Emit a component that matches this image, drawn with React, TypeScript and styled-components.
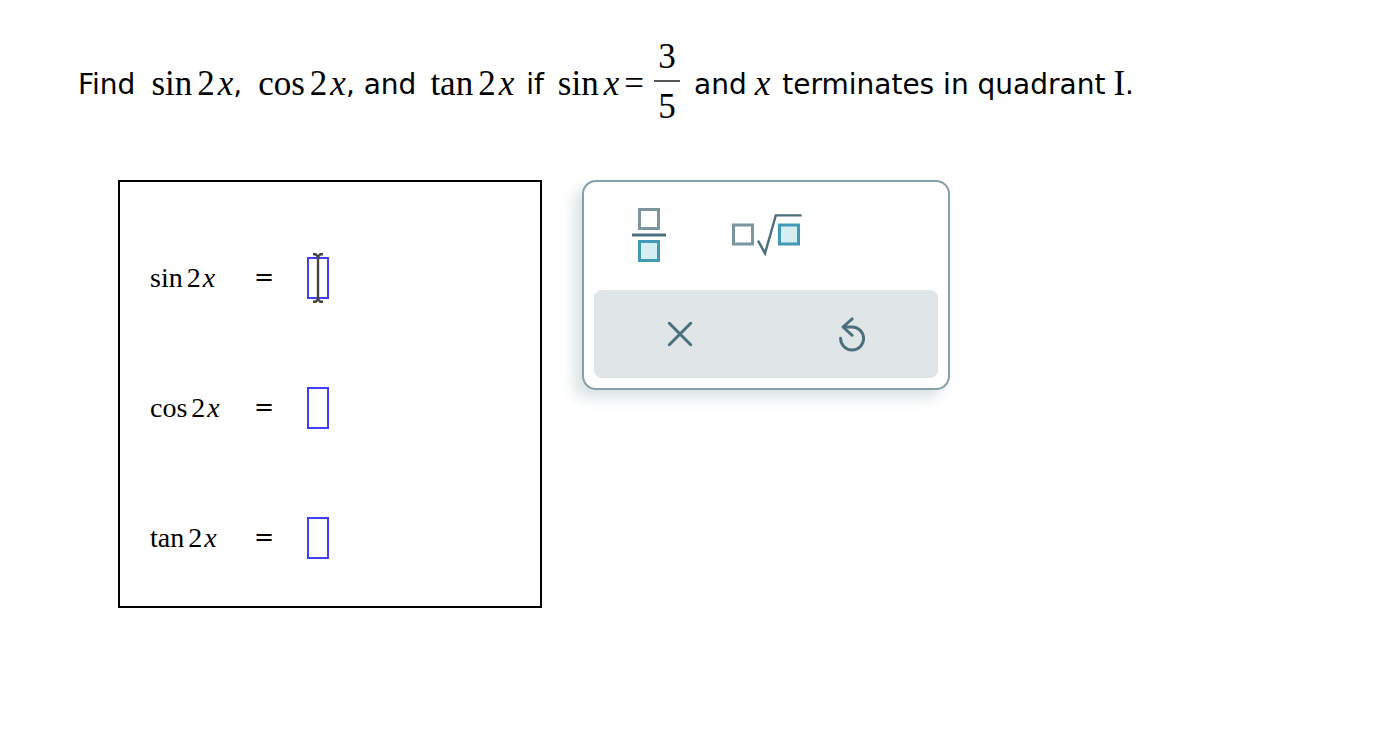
import React from "react";
import styled, { createGlobalStyle } from "styled-components";

const GlobalStyle = createGlobalStyle`
  *, *::before, *::after { box-sizing: border-box; }
  body {
    margin: 0;
    background: #fff;
    color: #000;
    font-family: Verdana, "DejaVu Sans", sans-serif;
  }
`;

const serif = `"Liberation Serif", "Times New Roman", serif`;

const Page = styled.main`
  padding: 40px 78px;
`;

const Statement = styled.p`
  display: flex;
  flex-wrap: wrap;
  align-items: center;
  margin: 0 0 56px;
  font-size: 28px;
  line-height: 78px;
`;

const Word = styled.span<{ $before?: number }>`
  margin-left: ${(p) => p.$before ?? 0}px;
  padding-top: 6px;
  white-space: pre;
`;

const MathText = styled.span<{ $before?: number }>`
  display: inline-flex;
  align-items: baseline;
  gap: 5px;
  margin-left: ${(p) => p.$before ?? 0}px;
  padding-top: 4px;
  font-family: ${serif};
  font-size: 35px;
`;

const Multiple = styled.span<{ $gap: number }>`
  display: inline-flex;
  gap: ${(p) => p.$gap}px;
`;

const Fraction = styled.span`
  display: inline-flex;
  flex-direction: column;
  width: 26px;
  margin-left: 10px;
  font-family: ${serif};
  font-size: 35px;
  text-align: center;
`;

const Numerator = styled.span`
  padding-bottom: 6px;
  line-height: 34px;
  border-bottom: 2px solid #555;
`;

const Denominator = styled.span`
  padding-top: 8px;
  line-height: 34px;
`;

const Workspace = styled.div`
  display: flex;
  flex-wrap: wrap;
  align-items: flex-start;
  gap: 40px;
  padding-left: 40px;
`;

const AnswerForm = styled.form`
  flex: 0 1 424px;
  padding: 31px 30px 3px;
  border: 2px solid #000;
`;

const AnswerRow = styled.div`
  display: grid;
  grid-template-columns: 104px 53px auto;
  align-items: center;
  justify-content: start;
  height: 130px;
`;

const AnswerLabel = styled.label`
  display: inline-flex;
  align-items: baseline;
  gap: 4px;
  font-family: ${serif};
  font-size: 28px;
`;

const Equals = styled.span`
  padding-bottom: 2px;
  font-size: 24px;
`;

const Slot = styled.span`
  position: relative;
  display: flex;
`;

const AnswerInput = styled.input`
  width: 22px;
  height: 42px;
  padding: 0;
  border: 2px solid #4040fa;
  border-radius: 0;
  background: #fff;
  font: 26px ${serif};
  text-align: center;
  outline: none;
  cursor: text;
`;

const Caret = styled.svg`
  position: absolute;
  left: 5px;
  top: -5px;
  pointer-events: none;
`;

const Palette = styled.section`
  flex: 0 1 368px;
  padding: 10px;
  border: 2px solid #86a0a9;
  border-radius: 14px;
  background: #fff;
  box-shadow: -8px 8px 14px rgba(76, 111, 125, 0.2);
`;

const Symbols = styled.div`
  display: flex;
  align-items: center;
  gap: 50px;
  height: 98px;
  padding: 0 30px 12px;
`;

const Actions = styled.div`
  display: flex;
  height: 88px;
  border-radius: 8px;
  background: #e0e5e7;
`;

const ToolButton = styled.button<{ $fill?: boolean }>`
  display: flex;
  align-items: center;
  justify-content: center;
  flex: ${(p) => (p.$fill ? "1" : "none")};
  padding: ${(p) => (p.$fill ? 0 : 8)}px;
  border: 0;
  background: transparent;
  cursor: pointer;
`;

function DoubleAngle({ fn, gap }: { fn: string; gap: number }) {
  return (
    <>
      <span>{fn}</span>
      <Multiple $gap={gap}>
        <span>2</span>
        <i>x</i>
      </Multiple>
    </>
  );
}

function FractionIcon() {
  return (
    <svg width="34" height="54" viewBox="0 0 34 54" fill="none" aria-hidden="true">
      <rect x="7.5" y="1.5" width="19" height="19" stroke="#7b949f" strokeWidth="3" />
      <path d="M0 27H34" stroke="#4c6f7d" strokeWidth="3.2" />
      <rect x="7.5" y="33.5" width="19" height="19" fill="#d5eef4" stroke="#4299b3" strokeWidth="3" />
    </svg>
  );
}

function RootIcon() {
  return (
    <svg width="70" height="42" viewBox="0 0 70 42" fill="none" aria-hidden="true">
      <rect x="1.5" y="11" width="19" height="19" stroke="#7b949f" strokeWidth="3" />
      <path d="M26 26.6L33 39.4L43.8 1.4H69.6" stroke="#4c6f7d" strokeWidth="2.4" />
      <rect x="47.5" y="11" width="19" height="19" fill="#d5eef4" stroke="#4299b3" strokeWidth="3" />
    </svg>
  );
}

function ClearIcon() {
  return (
    <svg width="26" height="26" viewBox="0 0 26 26" fill="none" aria-hidden="true">
      <path d="M2.3 2.3L23.7 23.7M23.7 2.3L2.3 23.7" stroke="#4c6f7d" strokeWidth="3" strokeLinecap="round" />
    </svg>
  );
}

function UndoIcon() {
  return (
    <svg width="28" height="36" viewBox="0 0 28 36" fill="none" aria-hidden="true">
      <path
        d="M2.6 22.3A11.5 11.5 0 1 0 14.1 11H5M14.2 2.9L5 11L14.2 19.3"
        stroke="#4c6f7d"
        strokeWidth="2.9"
        strokeLinecap="round"
        strokeLinejoin="round"
      />
    </svg>
  );
}

function IBeam() {
  return (
    <Caret width="12" height="52" viewBox="0 0 12 52" fill="none" aria-hidden="true">
      <path
        d="M1 2.2H3.6L6 4.6L8.4 2.2H11M6 4V48M1 49.8H3.6L6 47.4L8.4 49.8H11"
        stroke="#444"
        strokeWidth="2.4"
      />
    </Caret>
  );
}

const functions = ["sin", "cos", "tan"];

export default function App() {
  const [active, setActive] = React.useState("sin");

  return (
    <>
      <GlobalStyle />
      <Page>
        <Statement>
          <Word>Find</Word>
          <MathText $before={16}>
            <DoubleAngle fn="sin" gap={3} />
          </MathText>
          <Word>,</Word>
          <MathText $before={16}>
            <DoubleAngle fn="cos" gap={3} />
          </MathText>
          <Word>, and</Word>
          <MathText $before={14}>
            <DoubleAngle fn="tan" gap={3} />
          </MathText>
          <Word $before={12}>if</Word>
          <MathText $before={14}>
            <span>sin</span>
            <i>x</i>
            <span>=</span>
          </MathText>
          <Fraction>
            <Numerator>3</Numerator>
            <Denominator>5</Denominator>
          </Fraction>
          <Word $before={14}>and</Word>
          <MathText $before={8}>
            <i>x</i>
          </MathText>
          <Word $before={12}>terminates in quadrant</Word>
          <MathText $before={8}>I</MathText>
          <Word>.</Word>
        </Statement>

        <Workspace>
          <AnswerForm onSubmit={(e) => e.preventDefault()}>
            {functions.map((fn) => (
              <AnswerRow key={fn}>
                <AnswerLabel htmlFor={fn}>
                  <DoubleAngle fn={fn} gap={2} />
                </AnswerLabel>
                <Equals>=</Equals>
                <Slot>
                  <AnswerInput id={fn} type="text" autoComplete="off" onFocus={() => setActive(fn)} />
                  {active === fn && <IBeam />}
                </Slot>
              </AnswerRow>
            ))}
          </AnswerForm>

          <Palette aria-label="Math symbols">
            <Symbols>
              <ToolButton type="button" aria-label="Fraction">
                <FractionIcon />
              </ToolButton>
              <ToolButton type="button" aria-label="Square root">
                <RootIcon />
              </ToolButton>
            </Symbols>
            <Actions>
              <ToolButton type="button" $fill aria-label="Clear">
                <ClearIcon />
              </ToolButton>
              <ToolButton type="button" $fill aria-label="Undo">
                <UndoIcon />
              </ToolButton>
            </Actions>
          </Palette>
        </Workspace>
      </Page>
    </>
  );
}
